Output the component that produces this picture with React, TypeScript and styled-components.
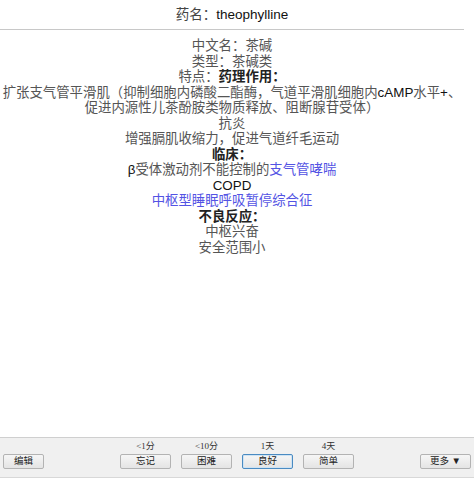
import React from "react";
import styled, { createGlobalStyle } from "styled-components";

const GlobalStyle = createGlobalStyle`
  html, body {
    margin: 0;
    padding: 0;
    background: #ffffff;
  }
`;

const CJK = `"Liberation Serif", "Noto Sans CJK SC", serif`;
const LATIN = `"Liberation Sans", Arial, "Noto Sans CJK SC", sans-serif`;

const Page = styled.div`
  display: flex;
  flex-direction: column;
  height: 100vh;
  width: 474px;
  overflow: hidden;
`;

const Card = styled.div`
  flex: 1;
  width: 464px;
  text-align: center;
  font-family: ${CJK};
  font-size: 13.4px;
  line-height: 15.5px;
  color: #555;
`;

const Question = styled.div`
  padding-top: 7px;
  height: 16px;
  font-size: 13.5px;
  line-height: 16px;
  color: #444;
`;

const Rule = styled.hr`
  margin: 6px 0 8px;
  border: none;
  border-top: 1px solid #c8c8c8;
  height: 0;
`;

const Line = styled.div<{ $wide?: boolean }>`
  white-space: nowrap;
  display: flex;
  justify-content: center;
  ${({ $wide }) => ($wide ? "margin: 0 -20px;" : "")}
`;

const Latin = styled.span`
  font-family: ${LATIN};
  color: #111;
`;

const Strong = styled.b`
  color: #222;
  font-weight: 700;
`;

const Link = styled.span`
  color: #5353e4;
`;

const Bar = styled.div`
  flex: none;
  height: 41px;
  border-top: 1px solid #cfcfcf;
  border-bottom: 1px solid #d8d8d8;
  background: #f0f0f0;
  display: grid;
  grid-template-columns: 1fr auto 1fr;
  align-items: end;
  padding: 0 3px 8px;
  box-sizing: border-box;
  margin-bottom: 2px;
  font-family: ${CJK};
`;

const Side = styled.div<{ $end?: boolean }>`
  display: flex;
  justify-content: ${({ $end }) => ($end ? "flex-end" : "flex-start")};
`;

const Answers = styled.div`
  display: flex;
  gap: 10px;
`;

const Answer = styled.div`
  display: flex;
  flex-direction: column;
  align-items: center;
  gap: 2px;
`;

const Due = styled.span`
  font-size: 9px;
  line-height: 11px;
  color: #333;
`;

const Button = styled.button<{ $w?: number; $focus?: boolean }>`
  width: ${({ $w }) => $w ?? 51}px;
  height: 15px;
  padding: 0;
  font-family: ${CJK};
  font-size: 9.5px;
  line-height: 13px;
  color: #222;
  border: 1px solid ${({ $focus }) => ($focus ? "#4a8bc2" : "#b3b3b3")};
  border-radius: 2px;
  background: linear-gradient(#f6f6f6, #e4e4e4);
  box-shadow: ${({ $focus }) => ($focus ? "inset 0 0 0 1px #cfe3f3" : "none")};
`;

const answers = [
  { due: "<1分", label: "忘记" },
  { due: "<10分", label: "困难" },
  { due: "1天", label: "良好", focus: true },
  { due: "4天", label: "简单" },
];

export default function App() {
  return (
    <Page>
      <GlobalStyle />
      <Card>
        <Question>
          药名：<Latin>theophylline</Latin>
        </Question>
        <Rule />
        <Line>中文名：茶碱</Line>
        <Line>类型：茶碱类</Line>
        <Line>
          特点：<Strong>药理作用：</Strong>
        </Line>
        <Line $wide>
          扩张支气管平滑肌（抑制细胞内磷酸二酯酶，气道平滑肌细胞内<Latin>cAMP</Latin>水平
          <Latin>+</Latin>、
        </Line>
        <Line>促进内源性儿茶酚胺类物质释放、阻断腺苷受体）</Line>
        <Line>抗炎</Line>
        <Line>增强膈肌收缩力，促进气道纤毛运动</Line>
        <Line>
          <Strong>临床：</Strong>
        </Line>
        <Line>
          <Latin>β</Latin>受体激动剂不能控制的<Link>支气管哮喘</Link>
        </Line>
        <Line>
          <Latin>COPD</Latin>
        </Line>
        <Line>
          <Link>中枢型睡眠呼吸暂停综合征</Link>
        </Line>
        <Line>
          <Strong>不良反应：</Strong>
        </Line>
        <Line>中枢兴奋</Line>
        <Line>安全范围小</Line>
      </Card>
      <Bar>
        <Side>
          <Button $w={41}>编辑</Button>
        </Side>
        <Answers>
          {answers.map((a) => (
            <Answer key={a.label}>
              <Due>{a.due}</Due>
              <Button $focus={a.focus}>{a.label}</Button>
            </Answer>
          ))}
        </Answers>
        <Side $end>
          <Button>更多 ▼</Button>
        </Side>
      </Bar>
    </Page>
  );
}
